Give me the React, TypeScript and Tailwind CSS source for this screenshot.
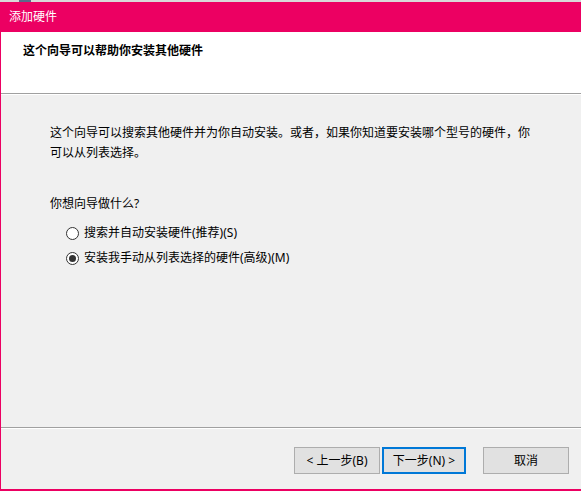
import React from "react";

const font = { fontFamily: '"Noto Sans", "Noto Sans CJK SC", sans-serif' };

function Radio({ checked }: { checked?: boolean }) {
  return (
    <span className="flex h-[13px] w-[13px] shrink-0 items-center justify-center rounded-full border border-[#333333] bg-white">
      {checked && <span className="h-[7px] w-[7px] rounded-full bg-[#333333]" />}
    </span>
  );
}

function WizButton({ label, focused }: { label: string; focused?: boolean }) {
  return (
    <button
      className={[
        "flex h-[27px] items-center justify-center bg-[#e1e1e1] text-[12px] text-black",
        focused ? "w-[84px] border-2 border-[#0078d7]" : "w-[86px] border border-[#adadad]",
      ].join(" ")}
    >
      {label}
    </button>
  );
}

export default function App() {
  return (
    <div className="flex h-[491px] w-[581px] flex-col overflow-hidden bg-[#f0f0f0]" style={font}>
      <div className="flex h-[2px] shrink-0 bg-[#d9d9d9]">
        <div className="ml-[19px] h-full w-[12px] bg-[#5a6a8a]" />
      </div>
      <div className="flex flex-1 flex-col border-b-2 border-l border-[#ec0062]">
        <div className="flex h-[30px] shrink-0 items-center bg-[#ec0062] pl-[8px] text-[12px] text-white">
          添加硬件
        </div>
        <div className="h-[62px] shrink-0 border-b border-[#a0a0a0] bg-white pl-[22px] pt-[10px] text-[12px] font-bold leading-[18px] text-black">
          这个向导可以帮助你安装其他硬件
        </div>
        <div className="flex flex-1 flex-col border-t border-white">
          <div className="flex-1 pl-[49px] pt-[28px] text-[12px] leading-[20px] text-black">
            <p>
              这个向导可以搜索其他硬件并为你自动安装。或者，如果你知道要安装哪个型号的硬件，你
              <br />
              可以从列表选择。
            </p>
            <p className="mt-[31px]">你想向导做什么?</p>
            <div className="mt-[9px] flex flex-col gap-[5px] pl-[16px]">
              <label className="flex items-center gap-[5px]">
                <Radio />
                <span>搜索并自动安装硬件(推荐)(S)</span>
              </label>
              <label className="flex items-center gap-[5px]">
                <Radio checked />
                <span>安装我手动从列表选择的硬件(高级)(M)</span>
              </label>
            </div>
          </div>
          <div className="h-[62px] shrink-0 border-t border-[#a0a0a0]">
            <div className="flex h-full items-start border-t border-white pl-[293px] pt-[18px]">
              <WizButton label="< 上一步(B)" />
              <div className="w-[2px]" />
              <WizButton label="下一步(N) >" focused />
              <div className="w-[17px]" />
              <WizButton label="取消" />
            </div>
          </div>
        </div>
      </div>
    </div>
  );
}
